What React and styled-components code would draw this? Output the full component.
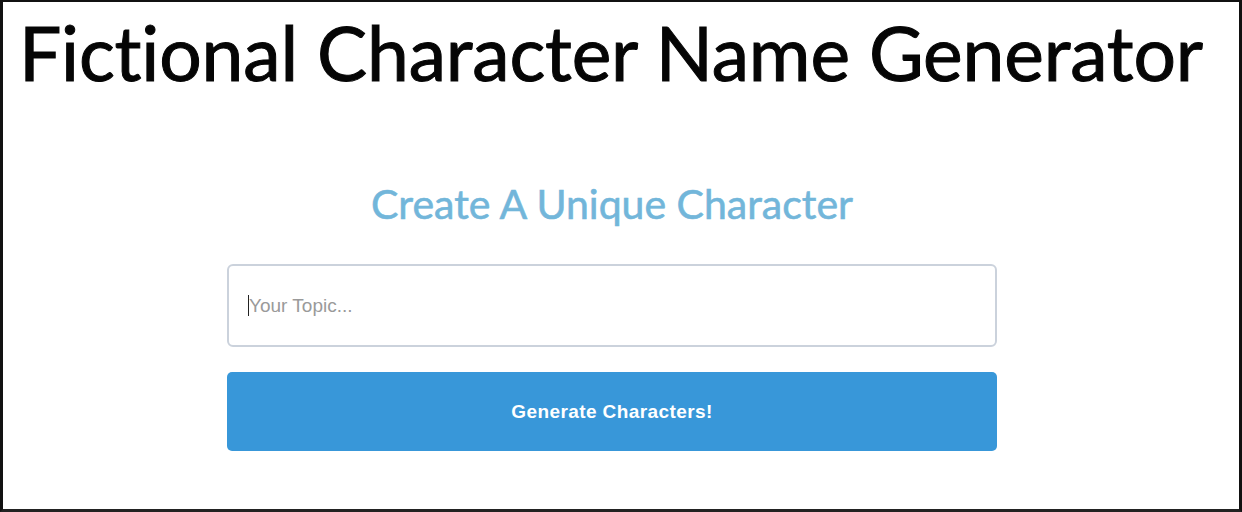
import React from "react";
import styled, { createGlobalStyle } from "styled-components";

const Global = createGlobalStyle`
  html, body { margin: 0; padding: 0; background: #ffffff; }
  body { width: 1242px; height: 512px; overflow: hidden; }
  * { box-sizing: border-box; }
`;

const Frame = styled.div`
  width: 1242px;
  height: 512px;
  border-top: 2px solid #111;
  border-left: 3px solid #111;
  border-right: 3px solid #111;
  border-bottom: 3px solid #222;
  background: #fff;
  display: flex;
  flex-direction: column;
  align-items: flex-start;
`;

const Title = styled.h1`
  margin: 4px 0 0 0;
  padding-left: 16px;
  font-family: "Lato", "Noto Sans", sans-serif;
  font-weight: 400;
  font-size: 75px;
  line-height: 92px;
  color: #050505;
  letter-spacing: -0.15px;
  -webkit-text-stroke: 1px #050505;
  white-space: nowrap;
`;

const Form = styled.div`
  width: 770px;
  margin-top: 83px;
  margin-left: 224px;
  display: flex;
  flex-direction: column;
  align-items: stretch;
`;

const Subtitle = styled.h2`
  margin: 0 0 37px 0;
  text-align: center;
  font-family: "Lato", "Noto Sans", sans-serif;
  font-weight: 400;
  font-size: 41px;
  line-height: 46px;
  color: #72b6da;
  -webkit-text-stroke: 0.6px #72b6da;
`;

const TopicInput = styled.div`
  height: 83px;
  border: 2px solid #cbd2dc;
  border-radius: 6px;
  display: flex;
  align-items: center;
  padding-left: 19px;
  font-family: "Liberation Sans", Arial, sans-serif;
  font-size: 19px;
  color: #9a9a9a;
`;

const Caret = styled.span`
  display: inline-block;
  width: 1px;
  height: 21px;
  background: #222;
`;

const Button = styled.button`
  margin-top: 25px;
  height: 79px;
  border: none;
  border-radius: 5px;
  background: #3897d9;
  color: #ffffff;
  font-family: "Liberation Sans", Arial, sans-serif;
  font-weight: 700;
  font-size: 19px;
  letter-spacing: 0.4px;
  cursor: pointer;
`;

export default function App() {
  return (
    <>
      <Global />
      <Frame>
        <Title>Fictional Character Name Generator</Title>
        <Form>
          <Subtitle>Create A Unique Character</Subtitle>
          <TopicInput>
            <Caret />
            Your Topic...
          </TopicInput>
          <Button>Generate Characters!</Button>
        </Form>
      </Frame>
    </>
  );
}
